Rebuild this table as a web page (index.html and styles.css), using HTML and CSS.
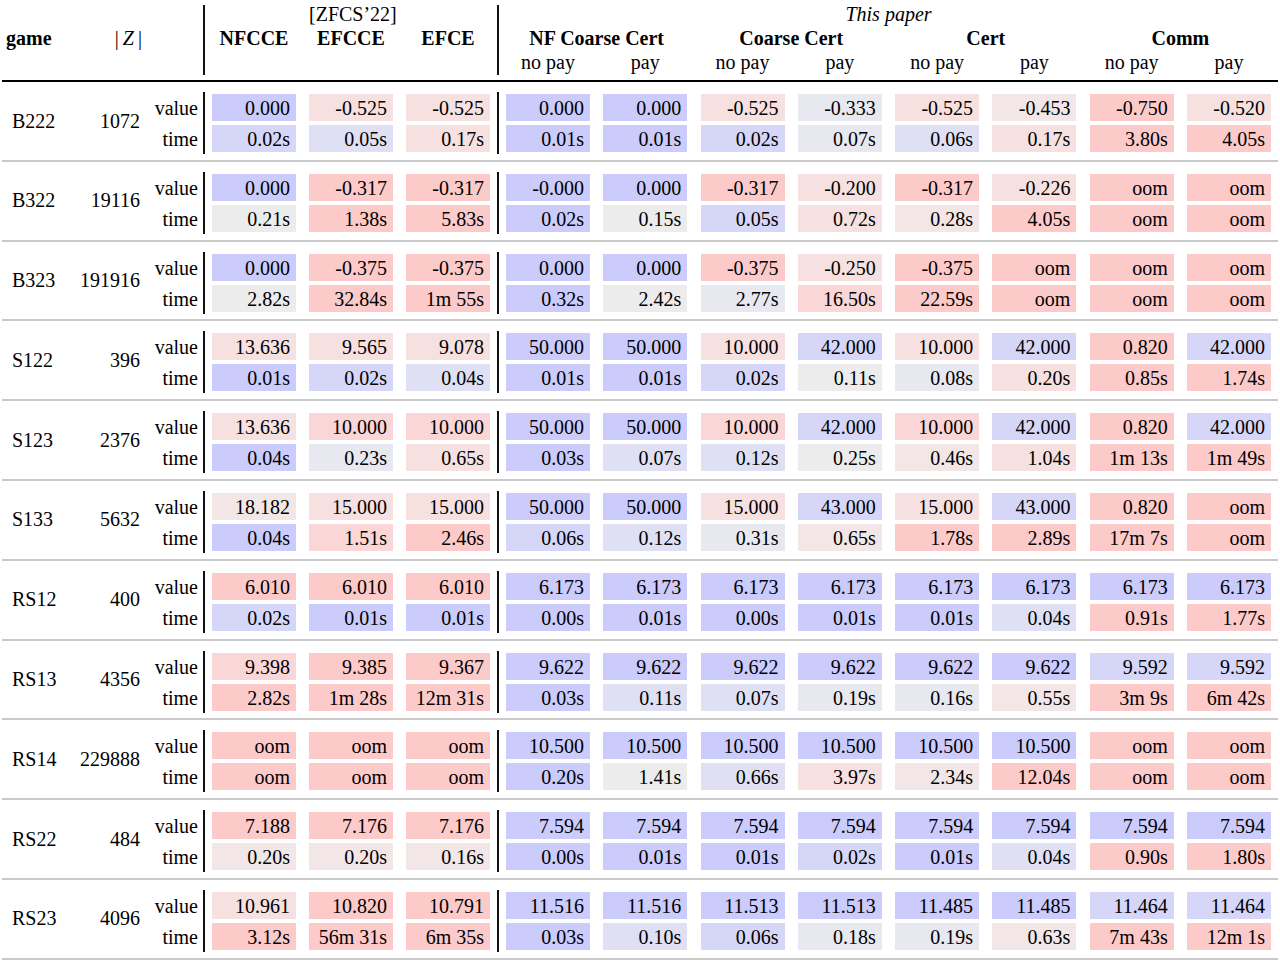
FILE: index.html
```html
<!DOCTYPE html>
<html>
<head>
<meta charset="utf-8">
<title>Results table</title>
<link rel="stylesheet" href="styles.css">
</head>
<body>
<div class="table">
  <div class="head">
    <div class="game hcell"><b>game</b></div>
    <div class="z hcell"><span class="bar">|</span><i class="zz">Z</i><span class="bar">|</span></div>
    <div class="lab"></div>
    <div class="vl"></div>
    <div class="blk blk1 hb">
      <div class="ref">[ZFCS’22]</div>
      <div class="ht r2c1">NFCCE</div>
      <div class="ht r2c2">EFCCE</div>
      <div class="ht r2c3">EFCE</div>
    </div>
    <div class="vl"></div>
    <div class="blk blk2 hb">
      <div class="paper">This paper</div>
      <div class="ht span2">NF Coarse Cert</div>
      <div class="ht span2">Coarse Cert</div>
      <div class="ht span2">Cert</div>
      <div class="ht span2">Comm</div>
      <div class="sub">no pay</div><div class="sub">pay</div>
      <div class="sub">no pay</div><div class="sub">pay</div>
      <div class="sub">no pay</div><div class="sub">pay</div>
      <div class="sub">no pay</div><div class="sub">pay</div>
    </div>
  </div>

  <div class="row">
    <div class="game">B222</div>
    <div class="z">1072</div>
    <div class="lab"><div>value</div><div>time</div></div>
    <div class="vl"></div>
    <div class="blk blk1">
      <div class="c b3">0.000</div><div class="c r1">-0.525</div><div class="c r1">-0.525</div>
      <div class="c b2">0.02s</div><div class="c b1">0.05s</div><div class="c r1">0.17s</div>
    </div>
    <div class="vl"></div>
    <div class="blk blk2">
      <div class="c b3">0.000</div><div class="c b3">0.000</div><div class="c r1">-0.525</div><div class="c b0">-0.333</div><div class="c r1">-0.525</div><div class="c nr">-0.453</div><div class="c r3">-0.750</div><div class="c r1">-0.520</div>
      <div class="c b3">0.01s</div><div class="c b3">0.01s</div><div class="c b2">0.02s</div><div class="c b0">0.07s</div><div class="c b1">0.06s</div><div class="c r1">0.17s</div><div class="c r3">3.80s</div><div class="c r3">4.05s</div>
    </div>
  </div>

  <div class="row">
    <div class="game">B322</div>
    <div class="z">19116</div>
    <div class="lab"><div>value</div><div>time</div></div>
    <div class="vl"></div>
    <div class="blk blk1">
      <div class="c b3">0.000</div><div class="c r3">-0.317</div><div class="c r3">-0.317</div>
      <div class="c n">0.21s</div><div class="c r3">1.38s</div><div class="c r3">5.83s</div>
    </div>
    <div class="vl"></div>
    <div class="blk blk2">
      <div class="c b3">-0.000</div><div class="c b3">0.000</div><div class="c r3">-0.317</div><div class="c r1">-0.200</div><div class="c r3">-0.317</div><div class="c r1">-0.226</div><div class="c r3">oom</div><div class="c r3">oom</div>
      <div class="c b3">0.02s</div><div class="c n">0.15s</div><div class="c b2">0.05s</div><div class="c r1">0.72s</div><div class="c nr">0.28s</div><div class="c r3">4.05s</div><div class="c r3">oom</div><div class="c r3">oom</div>
    </div>
  </div>

  <div class="row">
    <div class="game">B323</div>
    <div class="z">191916</div>
    <div class="lab"><div>value</div><div>time</div></div>
    <div class="vl"></div>
    <div class="blk blk1">
      <div class="c b3">0.000</div><div class="c r3">-0.375</div><div class="c r3">-0.375</div>
      <div class="c n">2.82s</div><div class="c r3">32.84s</div><div class="c r3">1m 55s</div>
    </div>
    <div class="vl"></div>
    <div class="blk blk2">
      <div class="c b3">0.000</div><div class="c b3">0.000</div><div class="c r3">-0.375</div><div class="c r1">-0.250</div><div class="c r3">-0.375</div><div class="c r3">oom</div><div class="c r3">oom</div><div class="c r3">oom</div>
      <div class="c b3">0.32s</div><div class="c n">2.42s</div><div class="c b0">2.77s</div><div class="c r2">16.50s</div><div class="c r3">22.59s</div><div class="c r3">oom</div><div class="c r3">oom</div><div class="c r3">oom</div>
    </div>
  </div>

  <div class="row">
    <div class="game">S122</div>
    <div class="z">396</div>
    <div class="lab"><div>value</div><div>time</div></div>
    <div class="vl"></div>
    <div class="blk blk1">
      <div class="c r1">13.636</div><div class="c r1">9.565</div><div class="c r1">9.078</div>
      <div class="c b3">0.01s</div><div class="c b2">0.02s</div><div class="c b1">0.04s</div>
    </div>
    <div class="vl"></div>
    <div class="blk blk2">
      <div class="c b3">50.000</div><div class="c b3">50.000</div><div class="c r1">10.000</div><div class="c b2">42.000</div><div class="c r1">10.000</div><div class="c b2">42.000</div><div class="c r3">0.820</div><div class="c b2">42.000</div>
      <div class="c b3">0.01s</div><div class="c b3">0.01s</div><div class="c b2">0.02s</div><div class="c n">0.11s</div><div class="c b0">0.08s</div><div class="c r1">0.20s</div><div class="c r3">0.85s</div><div class="c r3">1.74s</div>
    </div>
  </div>

  <div class="row">
    <div class="game">S123</div>
    <div class="z">2376</div>
    <div class="lab"><div>value</div><div>time</div></div>
    <div class="vl"></div>
    <div class="blk blk1">
      <div class="c r1">13.636</div><div class="c r2">10.000</div><div class="c r2">10.000</div>
      <div class="c b3">0.04s</div><div class="c b0">0.23s</div><div class="c r1">0.65s</div>
    </div>
    <div class="vl"></div>
    <div class="blk blk2">
      <div class="c b3">50.000</div><div class="c b3">50.000</div><div class="c r2">10.000</div><div class="c b2">42.000</div><div class="c r2">10.000</div><div class="c b2">42.000</div><div class="c r3">0.820</div><div class="c b2">42.000</div>
      <div class="c b3">0.03s</div><div class="c b1">0.07s</div><div class="c b1">0.12s</div><div class="c n">0.25s</div><div class="c nr">0.46s</div><div class="c r1">1.04s</div><div class="c r3">1m 13s</div><div class="c r3">1m 49s</div>
    </div>
  </div>

  <div class="row">
    <div class="game">S133</div>
    <div class="z">5632</div>
    <div class="lab"><div>value</div><div>time</div></div>
    <div class="vl"></div>
    <div class="blk blk1">
      <div class="c nr">18.182</div><div class="c r1">15.000</div><div class="c r1">15.000</div>
      <div class="c b3">0.04s</div><div class="c r2">1.51s</div><div class="c r3">2.46s</div>
    </div>
    <div class="vl"></div>
    <div class="blk blk2">
      <div class="c b3">50.000</div><div class="c b3">50.000</div><div class="c r1">15.000</div><div class="c b2">43.000</div><div class="c r1">15.000</div><div class="c b2">43.000</div><div class="c r3">0.820</div><div class="c r3">oom</div>
      <div class="c b2">0.06s</div><div class="c b1">0.12s</div><div class="c b0">0.31s</div><div class="c nr">0.65s</div><div class="c r3">1.78s</div><div class="c r3">2.89s</div><div class="c r3">17m 7s</div><div class="c r3">oom</div>
    </div>
  </div>

  <div class="row">
    <div class="game">RS12</div>
    <div class="z">400</div>
    <div class="lab"><div>value</div><div>time</div></div>
    <div class="vl"></div>
    <div class="blk blk1">
      <div class="c r3">6.010</div><div class="c r3">6.010</div><div class="c r3">6.010</div>
      <div class="c b2">0.02s</div><div class="c b3">0.01s</div><div class="c b3">0.01s</div>
    </div>
    <div class="vl"></div>
    <div class="blk blk2">
      <div class="c b3">6.173</div><div class="c b3">6.173</div><div class="c b3">6.173</div><div class="c b3">6.173</div><div class="c b3">6.173</div><div class="c b3">6.173</div><div class="c b3">6.173</div><div class="c b3">6.173</div>
      <div class="c b3">0.00s</div><div class="c b3">0.01s</div><div class="c b3">0.00s</div><div class="c b3">0.01s</div><div class="c b3">0.01s</div><div class="c b1">0.04s</div><div class="c r3">0.91s</div><div class="c r3">1.77s</div>
    </div>
  </div>

  <div class="row">
    <div class="game">RS13</div>
    <div class="z">4356</div>
    <div class="lab"><div>value</div><div>time</div></div>
    <div class="vl"></div>
    <div class="blk blk1">
      <div class="c r2">9.398</div><div class="c r3">9.385</div><div class="c r3">9.367</div>
      <div class="c r3">2.82s</div><div class="c r3">1m 28s</div><div class="c r3">12m 31s</div>
    </div>
    <div class="vl"></div>
    <div class="blk blk2">
      <div class="c b3">9.622</div><div class="c b3">9.622</div><div class="c b3">9.622</div><div class="c b3">9.622</div><div class="c b3">9.622</div><div class="c b3">9.622</div><div class="c b2">9.592</div><div class="c b2">9.592</div>
      <div class="c b3">0.03s</div><div class="c b1">0.11s</div><div class="c b1">0.07s</div><div class="c b0">0.19s</div><div class="c b0">0.16s</div><div class="c nr">0.55s</div><div class="c r3">3m 9s</div><div class="c r3">6m 42s</div>
    </div>
  </div>

  <div class="row">
    <div class="game">RS14</div>
    <div class="z">229888</div>
    <div class="lab"><div>value</div><div>time</div></div>
    <div class="vl"></div>
    <div class="blk blk1">
      <div class="c r3">oom</div><div class="c r3">oom</div><div class="c r3">oom</div>
      <div class="c r3">oom</div><div class="c r3">oom</div><div class="c r3">oom</div>
    </div>
    <div class="vl"></div>
    <div class="blk blk2">
      <div class="c b3">10.500</div><div class="c b3">10.500</div><div class="c b3">10.500</div><div class="c b3">10.500</div><div class="c b3">10.500</div><div class="c b3">10.500</div><div class="c r3">oom</div><div class="c r3">oom</div>
      <div class="c b3">0.20s</div><div class="c n">1.41s</div><div class="c b1">0.66s</div><div class="c r1">3.97s</div><div class="c nr">2.34s</div><div class="c r3">12.04s</div><div class="c r3">oom</div><div class="c r3">oom</div>
    </div>
  </div>

  <div class="row">
    <div class="game">RS22</div>
    <div class="z">484</div>
    <div class="lab"><div>value</div><div>time</div></div>
    <div class="vl"></div>
    <div class="blk blk1">
      <div class="c r3">7.188</div><div class="c r3">7.176</div><div class="c r3">7.176</div>
      <div class="c nr">0.20s</div><div class="c nr">0.20s</div><div class="c nr">0.16s</div>
    </div>
    <div class="vl"></div>
    <div class="blk blk2">
      <div class="c b3">7.594</div><div class="c b3">7.594</div><div class="c b3">7.594</div><div class="c b3">7.594</div><div class="c b3">7.594</div><div class="c b3">7.594</div><div class="c b3">7.594</div><div class="c b3">7.594</div>
      <div class="c b3">0.00s</div><div class="c b3">0.01s</div><div class="c b3">0.01s</div><div class="c b2">0.02s</div><div class="c b3">0.01s</div><div class="c b1">0.04s</div><div class="c r3">0.90s</div><div class="c r3">1.80s</div>
    </div>
  </div>

  <div class="row">
    <div class="game">RS23</div>
    <div class="z">4096</div>
    <div class="lab"><div>value</div><div>time</div></div>
    <div class="vl"></div>
    <div class="blk blk1">
      <div class="c r1">10.961</div><div class="c r3">10.820</div><div class="c r3">10.791</div>
      <div class="c r3">3.12s</div><div class="c r3">56m 31s</div><div class="c r3">6m 35s</div>
    </div>
    <div class="vl"></div>
    <div class="blk blk2">
      <div class="c b3">11.516</div><div class="c b3">11.516</div><div class="c b3">11.513</div><div class="c b3">11.513</div><div class="c b3">11.485</div><div class="c b3">11.485</div><div class="c b2">11.464</div><div class="c b2">11.464</div>
      <div class="c b3">0.03s</div><div class="c b1">0.10s</div><div class="c b2">0.06s</div><div class="c b0">0.18s</div><div class="c b0">0.19s</div><div class="c nr">0.63s</div><div class="c r3">7m 43s</div><div class="c r3">12m 1s</div>
    </div>
  </div>
</div>
</body>
</html>
```

FILE: styles.css
```css
html, body {
  margin: 0;
  padding: 0;
  background: #ffffff;
}

body {
  font-family: "Liberation Serif", "Times New Roman", serif;
  font-size: 20px;
  color: #000000;
}

.table {
  width: 1276px;
  margin-left: 2px;
}

.head {
  display: flex;
  padding-top: 2px;
  padding-bottom: 6px;
  border-bottom: 2px solid #000000;
}

.row {
  display: flex;
  padding-top: 12px;
  padding-bottom: 7.8px;
  border-bottom: 2px solid #c9c9c9;
}

.game {
  width: 70px;
  box-sizing: border-box;
  padding-left: 10px;
  padding-bottom: 4px;
  display: flex;
  align-items: center;
}

.head .game {
  padding-left: 4px;
  padding-bottom: 0;
}

.z {
  width: 70px;
  box-sizing: border-box;
  padding-right: 2px;
  padding-bottom: 4px;
  display: flex;
  align-items: center;
  justify-content: flex-end;
}

.head .z {
  padding-right: 0;
  padding-bottom: 0;
}

.hcell {
  align-items: flex-start;
  padding-top: 24px;
  line-height: 24px;
}

.bar {
  color: #000000;
}

.zz {
  padding: 0 4px 0 4px;
}

.lab {
  width: 58px;
  box-sizing: border-box;
  padding-right: 2px;
  display: grid;
  grid-auto-rows: 27px;
  row-gap: 4px;
  text-align: right;
  line-height: 26px;
}

.lab > div {
  padding-top: 1px;
}

.vl {
  width: 2px;
  background: #111111;
  margin-left: 3px;
  margin-top: -2px;
  margin-bottom: -2px;
  flex: none;
}

.head .vl {
  margin-top: 3px;
  margin-bottom: -1px;
}

.blk {
  display: grid;
  margin-left: 7px;
  grid-auto-rows: 27px;
  row-gap: 4px;
}

.blk + .vl {
  margin-left: 7px;
}

.blk1 {
  grid-template-columns: repeat(3, 84px);
  column-gap: 13px;
}

.blk2 {
  grid-template-columns: repeat(8, 84px);
  column-gap: 13.29px;
}

.hb {
  grid-template-rows: 24px 24px 24px;
  grid-auto-rows: 24px;
  row-gap: 0;
  line-height: 24px;
  text-align: center;
}

.ref {
  grid-column: 2;
  grid-row: 1;
  white-space: nowrap;
}

.paper {
  grid-column: 1 / -1;
  grid-row: 1;
  font-style: italic;
}

.ht {
  grid-row: 2;
  font-weight: bold;
  white-space: nowrap;
}

.r2c1 { grid-column: 1; }
.r2c2 { grid-column: 2; }
.r2c3 { grid-column: 3; }

.span2 {
  grid-column: span 2;
}

.sub {
  grid-row: 3;
  white-space: nowrap;
}

.c {
  text-align: right;
  padding-right: 6px;
  padding-top: 1px;
  line-height: 26px;
  white-space: nowrap;
}

.b3 { background: #cbcbfc; }
.b2 { background: #d6d6f8; }
.b1 { background: #e0e0f4; }
.b0 { background: #e8e8f0; }
.n { background: #ececec; }
.nr { background: #f2e6e6; }
.r1 { background: #f6e0e0; }
.r2 { background: #fad6d6; }
.r3 { background: #fdcaca; }
```
